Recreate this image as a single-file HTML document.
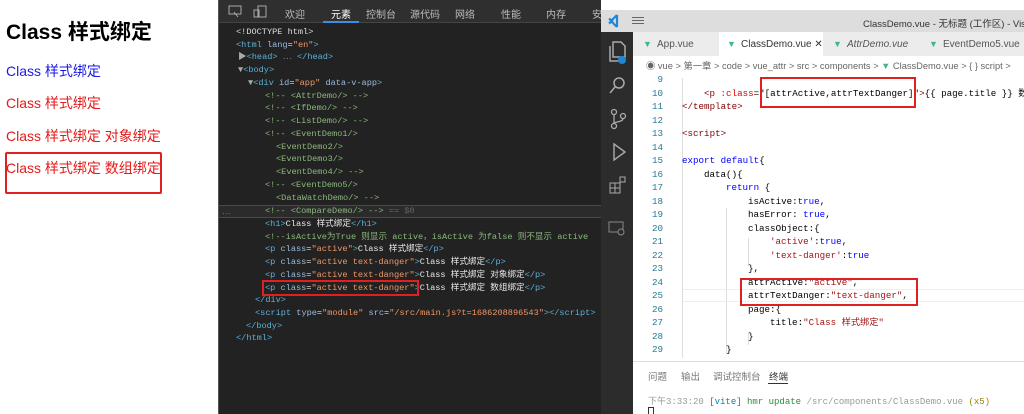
<!DOCTYPE html>
<html><head><meta charset="utf-8">
<style>
*{margin:0;padding:0;box-sizing:border-box}
body{width:1024px;height:414px;overflow:hidden;position:relative;background:#fff;font-family:"Liberation Sans","Noto Sans CJK SC",sans-serif}
.abs{position:absolute}
#left{left:0;top:0;width:218px;height:414px;background:#fff}
#left h1{position:absolute;left:6px;top:16px;font-size:21px;font-weight:bold;color:#000;white-space:nowrap}
#left p{position:absolute;left:6px;font-size:14px;white-space:nowrap}
.mono{font-family:"Liberation Mono","Noto Sans CJK SC",monospace}
#dev{left:218px;top:0;width:383px;height:414px;background:#222;border-left:1px solid #555;overflow:hidden}
#devbar{left:0;top:0;width:100%;height:23px;background:#2f2f2f;border-bottom:1px solid #444}
.dt{position:absolute;top:6px;font-size:10px;color:#bbb;white-space:nowrap}
.dl{position:absolute;font-size:8.6px;white-space:pre;color:#ddd;line-height:12px}
.tg{color:#5db0d7}.at{color:#9bbbdc}.av{color:#f29766}.cm{color:#8cb87c}.tx{color:#e8e8e8}
#vs{left:601px;top:10px;width:423px;height:404px;background:#fff;overflow:hidden}
.cl{position:absolute;left:81px;font-size:9.2px;white-space:pre;color:#000;line-height:13px}
.ln{position:absolute;left:40px;width:22px;text-align:right;font-size:9.2px;color:#237893;line-height:13px}
.kw{color:#0000ff}.st{color:#a31515}.tgv{color:#800000}.bl{color:#0451a5}
</style></head><body>

<div id="left" class="abs">
<h1>Class 样式绑定</h1>
<p style="top:61px;color:#1a1ae6">Class 样式绑定</p>
<p style="top:93px;color:#e61a1a">Class 样式绑定</p>
<p style="top:126px;color:#e61a1a">Class 样式绑定 对象绑定</p>
<p style="top:158px;color:#e61a1a">Class 样式绑定 数组绑定</p>
<div class="abs" style="left:5px;top:152px;width:157px;height:42px;border:2px solid #e02020;border-radius:2px"></div>
</div>

<div id="dev" class="abs">
<div id="devbar" class="abs">
<svg class="abs" style="left:9px;top:5px" width="14" height="13"><rect x="1" y="1" width="12" height="8" fill="none" stroke="#aaa"/><path d="M6 7l4 5" stroke="#aaa"/></svg>
<svg class="abs" style="left:34px;top:5px" width="14" height="13"><rect x="5" y="1" width="8" height="11" fill="none" stroke="#aaa"/><rect x="1" y="5" width="5" height="7" fill="none" stroke="#aaa"/></svg>
<span class="dt" style="left:66px">欢迎</span>
<span class="dt" style="left:112px;color:#fff">元素</span>
<div class="abs" style="left:104px;top:21px;width:36px;height:2px;background:#3a8ee6"></div>
<span class="dt" style="left:147px">控制台</span>
<span class="dt" style="left:191px">源代码</span>
<span class="dt" style="left:236px">网络</span>
<span class="dt" style="left:282px">性能</span>
<span class="dt" style="left:327px">内存</span>
<span class="dt" style="left:373px">安全</span>
</div>
<div class="abs" style="left:0;top:205px;width:383px;height:13px;background:#2b2b2b;border-top:1px solid #4a4a4a;border-bottom:1px solid #4a4a4a"></div>
<span class="dl" style="left:3px;top:205px;color:#888">…</span>
<div class="dl mono" style="left:17px;top:26px">&lt;!DOCTYPE html&gt;</div>
<div class="dl mono" style="left:17px;top:39px"><span class="tg">&lt;html</span> <span class="at">lang</span>=<span class="av">"en"</span><span class="tg">&gt;</span></div>
<div class="dl mono" style="left:19px;top:51px"><span style="color:#aaa">▶</span><span class="tg">&lt;head&gt;</span> <span style="color:#888">⋯</span> <span class="tg">&lt;/head&gt;</span></div>
<div class="dl mono" style="left:19px;top:64px"><span style="color:#aaa">▼</span><span class="tg">&lt;body&gt;</span></div>
<div class="dl mono" style="left:29px;top:77px"><span style="color:#aaa">▼</span><span class="tg">&lt;div</span> <span class="at">id</span>=<span class="av">"app"</span> <span class="at">data-v-app</span><span class="tg">&gt;</span></div>
<div class="dl mono cm" style="left:46px;top:90px">&lt;!-- &lt;AttrDemo/&gt; --&gt;</div>
<div class="dl mono cm" style="left:46px;top:102px">&lt;!-- &lt;IfDemo/&gt; --&gt;</div>
<div class="dl mono cm" style="left:46px;top:115px">&lt;!-- &lt;ListDemo/&gt; --&gt;</div>
<div class="dl mono cm" style="left:46px;top:128px">&lt;!-- &lt;EventDemo1/&gt;</div>
<div class="dl mono cm" style="left:57px;top:141px">&lt;EventDemo2/&gt;</div>
<div class="dl mono cm" style="left:57px;top:153px">&lt;EventDemo3/&gt;</div>
<div class="dl mono cm" style="left:57px;top:166px">&lt;EventDemo4/&gt; --&gt;</div>
<div class="dl mono cm" style="left:46px;top:179px">&lt;!-- &lt;EventDemo5/&gt;</div>
<div class="dl mono cm" style="left:57px;top:192px">&lt;DataWatchDemo/&gt; --&gt;</div>
<div class="dl mono cm" style="left:46px;top:205px">&lt;!-- &lt;CompareDemo/&gt; --&gt; <span style="color:#666">== $0</span></div>
<div class="dl mono" style="left:46px;top:218px"><span class="tg">&lt;h1&gt;</span><span class="tx">Class 样式绑定</span><span class="tg">&lt;/h1&gt;</span></div>
<div class="dl mono cm" style="left:46px;top:231px">&lt;!--isActive为True 则显示 active，isActive 为false 则不显示 active</div>
<div class="dl mono" style="left:46px;top:243px"><span class="tg">&lt;p</span> <span class="at">class</span>=<span class="av">"active"</span><span class="tg">&gt;</span><span class="tx">Class 样式绑定</span><span class="tg">&lt;/p&gt;</span></div>
<div class="dl mono" style="left:46px;top:256px"><span class="tg">&lt;p</span> <span class="at">class</span>=<span class="av">"active text-danger"</span><span class="tg">&gt;</span><span class="tx">Class 样式绑定</span><span class="tg">&lt;/p&gt;</span></div>
<div class="dl mono" style="left:46px;top:269px"><span class="tg">&lt;p</span> <span class="at">class</span>=<span class="av">"active text-danger"</span><span class="tg">&gt;</span><span class="tx">Class 样式绑定 对象绑定</span><span class="tg">&lt;/p&gt;</span></div>
<div class="dl mono" style="left:46px;top:282px"><span class="tg">&lt;p</span> <span class="at">class</span>=<span class="av">"active text-danger"</span><span class="tg">&gt;</span><span class="tx">Class 样式绑定 数组绑定</span><span class="tg">&lt;/p&gt;</span></div>
<div class="abs" style="left:43px;top:280px;width:157px;height:16px;border:2px solid #e02020"></div>
<div class="dl mono tg" style="left:36px;top:294px">&lt;/div&gt;</div>
<div class="dl mono" style="left:36px;top:307px"><span class="tg">&lt;script</span> <span class="at">type</span>=<span class="av">"module"</span> <span class="at">src</span>=<span class="av">"/src/main.js?t=1686208896543"</span><span class="tg">&gt;&lt;/script&gt;</span></div>
<div class="dl mono tg" style="left:27px;top:320px">&lt;/body&gt;</div>
<div class="dl mono tg" style="left:17px;top:332px">&lt;/html&gt;</div>
</div>

<div id="vs" class="abs">
<div class="abs" style="left:0;top:0;width:423px;height:22px;background:#dddddd"></div>
<svg class="abs" style="left:6px;top:4px" width="14" height="14"><path d="M10 1L4 7l6 6M10 1v12M2 4.5l3 2.5-3 2.5" fill="none" stroke="#1e88d8" stroke-width="2.2"/></svg>
<div class="abs" style="left:31px;top:7px;width:12px;height:1px;background:#666;box-shadow:0 3px 0 #666,0 6px 0 #666"></div>
<span class="abs" style="left:262px;top:6px;font-size:9.5px;color:#333;white-space:nowrap">ClassDemo.vue - 无标题 (工作区) - Visual St</span>
<div class="abs" style="left:0;top:22px;width:32px;height:382px;background:#2c2c2c"></div>
<svg class="abs" style="left:7px;top:30px" width="20" height="24"><path d="M5 2h8l4 4v11H5z M2 6v15h11" fill="none" stroke="#aaa" stroke-width="1.5"/><circle cx="14" cy="20" r="4" fill="#1e88d8"/></svg>
<svg class="abs" style="left:8px;top:66px" width="18" height="18"><circle cx="10" cy="7" r="5" fill="none" stroke="#aaa" stroke-width="1.5"/><path d="M6 11L1 17" stroke="#aaa" stroke-width="1.5"/></svg>
<svg class="abs" style="left:8px;top:98px" width="18" height="22"><circle cx="5" cy="4" r="2.5" fill="none" stroke="#aaa" stroke-width="1.3"/><circle cx="5" cy="18" r="2.5" fill="none" stroke="#aaa" stroke-width="1.3"/><circle cx="14" cy="8" r="2.5" fill="none" stroke="#aaa" stroke-width="1.3"/><path d="M5 6.5v9M14 10.5c0 4-9 3-9 5" fill="none" stroke="#aaa" stroke-width="1.3"/></svg>
<svg class="abs" style="left:8px;top:132px" width="18" height="20"><path d="M5 2l11 8-11 8z" fill="none" stroke="#aaa" stroke-width="1.4"/></svg>
<svg class="abs" style="left:7px;top:165px" width="20" height="20"><rect x="2" y="8" width="5" height="5" fill="none" stroke="#aaa"/><rect x="7" y="8" width="5" height="5" fill="none" stroke="#aaa"/><rect x="2" y="13" width="5" height="5" fill="none" stroke="#aaa"/><rect x="7" y="13" width="5" height="5" fill="none" stroke="#aaa"/><rect x="12" y="2" width="5" height="5" fill="none" stroke="#aaa"/></svg>
<svg class="abs" style="left:7px;top:211px" width="18" height="16"><rect x="1" y="1" width="14" height="10" fill="none" stroke="#888"/><circle cx="13" cy="11" r="3" fill="#2c2c2c" stroke="#888"/></svg>

<div class="abs" style="left:32px;top:22px;width:391px;height:24px;background:#ececec"></div>
<div class="abs" style="left:118px;top:22px;width:104px;height:24px;background:#fff"></div>
<div class="abs" style="left:32px;top:32px;font-size:10px;color:#555;white-space:nowrap">
<span class="abs" style="left:10px;top:-3px;color:#41b883;font-size:9px">▼</span><span class="abs" style="left:24px;top:-3px">App.vue</span>
<span class="abs" style="left:94px;top:-3px;color:#41b883;font-size:9px">▼</span><span class="abs" style="left:108px;top:-3px;color:#333">ClassDemo.vue ✕</span>
<span class="abs" style="left:200px;top:-3px;color:#41b883;font-size:9px">▼</span><span class="abs" style="left:214px;top:-3px;font-style:italic">AttrDemo.vue</span>
<span class="abs" style="left:296px;top:-3px;color:#41b883;font-size:9px">▼</span><span class="abs" style="left:310px;top:-3px">EventDemo5.vue</span>
</div>
<div class="abs" style="left:45px;top:48px;font-size:9.3px;color:#666;white-space:nowrap">◉ vue &gt; 第一章 &gt; code &gt; vue_attr &gt; src &gt; components &gt; <span style="color:#41b883">▼</span> ClassDemo.vue &gt; { } script &gt;</div>

<div class="abs" style="left:81px;top:68px;width:1px;height:280px;background:#ddd"></div>
<div class="abs" style="left:125px;top:198px;width:1px;height:145px;background:#ddd"></div>
<div class="abs" style="left:147px;top:228px;width:1px;height:28px;background:#ddd"></div>
<div class="abs" style="left:147px;top:323px;width:1px;height:12px;background:#ddd"></div>
<div class="abs" style="left:82px;top:279px;width:341px;height:13px;border-top:1px solid #eee;border-bottom:1px solid #eee"></div>

<div class="ln mono" style="top:63px">9</div>
<div class="ln mono" style="top:77px">10</div><div class="cl mono" style="left:103px;top:77px"><span class="tgv">&lt;p</span> <span style="color:#e50000">:class</span>="<span>[attrActive,attrTextDanger]</span>"<span class="tgv">&gt;</span>{{ page.title }} 数</div>
<div class="ln mono" style="top:90px">11</div><div class="cl mono tgv" style="top:90px">&lt;/template&gt;</div>
<div class="ln mono" style="top:104px">12</div>
<div class="ln mono" style="top:117px">13</div><div class="cl mono tgv" style="top:117px">&lt;script&gt;</div>
<div class="ln mono" style="top:131px">14</div>
<div class="ln mono" style="top:144px">15</div><div class="cl mono" style="top:144px"><span class="kw">export default</span>{</div>
<div class="ln mono" style="top:158px">16</div><div class="cl mono" style="left:103px;top:158px">data(){</div>
<div class="ln mono" style="top:171px">17</div><div class="cl mono" style="left:125px;top:171px"><span class="kw">return</span> {</div>
<div class="ln mono" style="top:185px">18</div><div class="cl mono" style="left:147px;top:185px">isActive:<span class="kw">true</span>,</div>
<div class="ln mono" style="top:198px">19</div><div class="cl mono" style="left:147px;top:198px">hasError: <span class="kw">true</span>,</div>
<div class="ln mono" style="top:212px">20</div><div class="cl mono" style="left:147px;top:212px">classObject:{</div>
<div class="ln mono" style="top:225px">21</div><div class="cl mono" style="left:169px;top:225px"><span class="st">'active'</span>:<span class="kw">true</span>,</div>
<div class="ln mono" style="top:239px">22</div><div class="cl mono" style="left:169px;top:239px"><span class="st">'text-danger'</span>:<span class="kw">true</span></div>
<div class="ln mono" style="top:252px">23</div><div class="cl mono" style="left:147px;top:252px">},</div>
<div class="ln mono" style="top:266px">24</div><div class="cl mono" style="left:147px;top:266px">attrActive:<span class="st">"active"</span>,</div>
<div class="ln mono" style="top:279px">25</div><div class="cl mono" style="left:147px;top:279px">attrTextDanger:<span class="st">"text-danger"</span>,</div>
<div class="ln mono" style="top:293px">26</div><div class="cl mono" style="left:147px;top:293px">page:{</div>
<div class="ln mono" style="top:306px">27</div><div class="cl mono" style="left:169px;top:306px">title:<span class="st">"Class 样式绑定"</span></div>
<div class="ln mono" style="top:320px">28</div><div class="cl mono" style="left:147px;top:320px">}</div>
<div class="ln mono" style="top:333px">29</div><div class="cl mono" style="left:125px;top:333px">}</div>

<div class="abs" style="left:159px;top:67px;width:156px;height:31px;border:2px solid #e02020"></div>
<div class="abs" style="left:139px;top:268px;width:178px;height:28px;border:2px solid #e02020"></div>

<div class="abs" style="left:32px;top:351px;width:391px;height:53px;background:#fff;border-top:1px solid #ddd"></div>
<span class="abs" style="left:47px;top:359px;font-size:9.5px;color:#777">问题</span>
<span class="abs" style="left:80px;top:359px;font-size:9.5px;color:#777">输出</span>
<span class="abs" style="left:112px;top:359px;font-size:9.5px;color:#777">调试控制台</span>
<span class="abs" style="left:168px;top:359px;font-size:9.5px;color:#333">终端</span>
<div class="abs" style="left:167px;top:373px;width:20px;height:1px;background:#333"></div>
<div class="abs mono" style="left:47px;top:384px;font-size:9px;white-space:nowrap;color:#999">下午3:33:20 <span style="color:#0a7ea4">[vite]</span> <span style="color:#2e8b3b">hmr update</span> /src/components/ClassDemo.vue <span style="color:#9a8400">(x5)</span></div>
<div class="abs" style="left:47px;top:397px;width:6px;height:9px;border:1px solid #333"></div>
</div>
</body></html>
